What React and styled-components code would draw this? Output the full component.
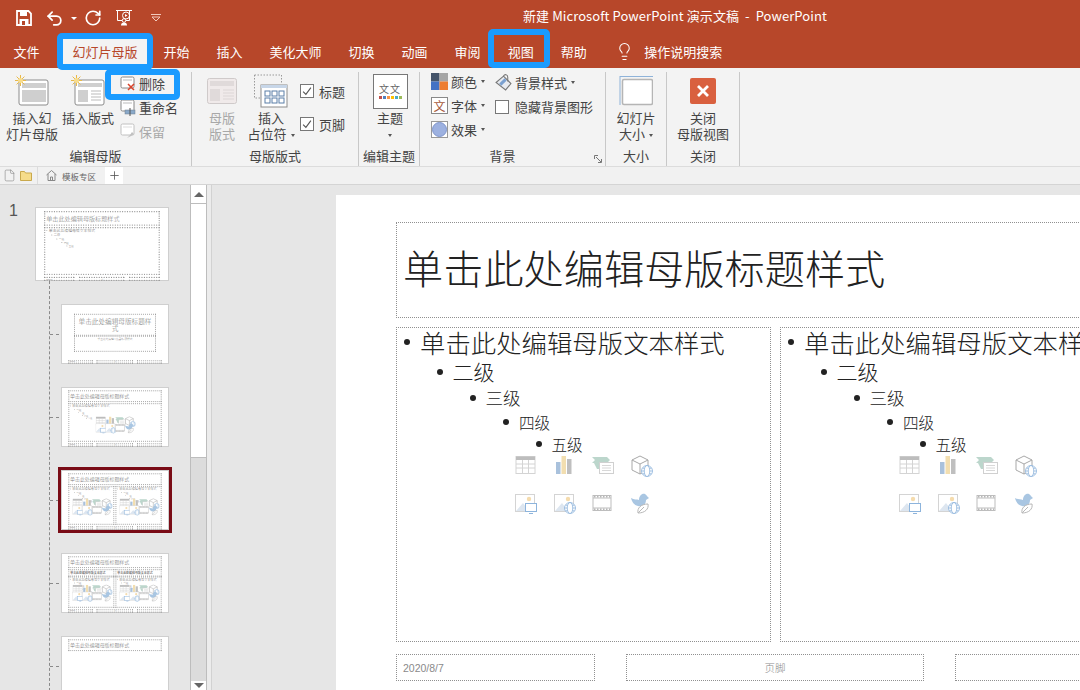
import styled, { createGlobalStyle } from "styled-components";
import { Undo2, RotateCw, Lightbulb, Plus, File } from "lucide-react";

const FONT = `"Noto Sans CJK SC", "Noto Sans", sans-serif`;
const RED = "#b7472a";
const BLUE = "#1a9bff";

const Global = createGlobalStyle`
  html, body {
    margin: 0;
    width: 1080px;
    height: 690px;
    overflow: hidden;
    font-family: ${FONT};
  }
`;

const Page = styled.div`
  width: 1080px;
  height: 690px;
  display: flex;
  flex-direction: column;
  overflow: hidden;
  background: #e6e6e6;
  color: #444;
`;

/* title bar */
const TitleBar = styled.div`
  height: 36px;
  flex: none;
  display: flex;
  align-items: center;
  background: ${RED};
  color: #fff;
`;
const QuickBar = styled.div`
  width: 523px;
  flex: none;
  display: flex;
  align-items: center;
  padding-left: 16px;
  box-sizing: border-box;
`;
const QuickItem = styled.span`
  display: flex;
  margin-left: ${(p) => p.$ml || 0}px;
`;
const TinyCaret = styled.span`
  width: 0;
  height: 0;
  border: 3px solid transparent;
  border-top: 3px solid ${(p) => p.$color || "#fff"};
  border-bottom: none;
  margin-left: ${(p) => p.$ml || 0}px;
`;
const DocTitle = styled.div`
  font-size: 13px;
  letter-spacing: 0.08px;
  padding-bottom: 6px;
  white-space: pre;
  font-family: "Noto Sans CJK SC", sans-serif;
`;

/* tabs */
const TabRow = styled.div`
  height: 32px;
  flex: none;
  display: flex;
  background: ${RED};
  position: relative;
  z-index: 2;
`;
const Tab = styled.div`
  position: relative;
  height: 32px;
  box-sizing: border-box;
  display: flex;
  align-items: center;
  padding: 0 13.5px 2px;
  margin-left: ${(p) => p.$ml || 0}px;
  margin-right: ${(p) => p.$mr || 0}px;
  font-size: 13px;
  white-space: nowrap;
  color: ${(p) => (p.$active ? RED : "#fff")};
  background: ${(p) => (p.$active ? "#f3f3f3" : "transparent")};
`;
const Frame = styled.span`
  position: absolute;
  top: ${(p) => p.$t}px;
  right: ${(p) => p.$r}px;
  bottom: ${(p) => p.$b}px;
  left: ${(p) => p.$l}px;
  border: 6px solid ${BLUE};
  border-radius: 5px;
  pointer-events: none;
  z-index: 5;
`;
const Search = styled.div`
  display: flex;
  align-items: center;
  gap: 10px;
  margin-left: 15px;
  padding-bottom: 2px;
  font-size: 13px;
  color: #fff;
`;

/* ribbon */
const Ribbon = styled.div`
  height: 98px;
  flex: none;
  display: flex;
  background: #f3f3f3;
  font-size: 13px;
  color: #444;
`;
const Group = styled.div`
  position: relative;
  width: ${(p) => p.$w}px;
  height: 94px;
  margin-top: 4px;
  flex: none;
  display: flex;
  flex-direction: column;
  box-sizing: border-box;
  border-right: 1px solid #c8c8c8;
`;
const GroupBody = styled.div`
  height: 72px;
  display: flex;
  padding-left: ${(p) => p.$pl || 0}px;
  gap: ${(p) => p.$gap || 0}px;
`;
const GroupLabel = styled.div`
  flex: 1;
  display: flex;
  align-items: center;
  justify-content: center;
  padding-top: 2px;
  padding-right: ${(p) => p.$pr || 0}px;
  font-size: 13px;
  line-height: 16px;
`;
const Launcher = styled.svg`
  position: absolute;
  right: 3px;
  bottom: 3px;
`;
const LargeButton = styled.div`
  width: ${(p) => p.$w || 56}px;
  flex: none;
  display: flex;
  flex-direction: column;
  align-items: center;
  color: ${(p) => (p.$off ? "#a8a8a8" : "#444")};
`;
const IconBox = styled.div`
  height: 38px;
  display: flex;
  align-items: center;
  justify-content: center;
`;
const LargeLabel = styled.div`
  line-height: 16px;
  text-align: center;
  white-space: nowrap;
`;
const SmallColumn = styled.div`
  width: ${(p) => p.$w || 60}px;
  flex: none;
  display: flex;
  flex-direction: column;
  margin-left: ${(p) => p.$ml || 0}px;
  margin-top: ${(p) => p.$mt || 0}px;
`;
const SmallButton = styled.div`
  position: relative;
  height: 24px;
  flex: none;
  display: flex;
  align-items: center;
  gap: ${(p) => p.$gap || 2}px;
  white-space: nowrap;
  color: ${(p) => (p.$off ? "#a8a8a8" : "#444")};
`;
const CheckColumn = styled.div`
  display: flex;
  flex-direction: column;
  gap: 17px;
  padding-top: 11px;
`;
const CheckRow = styled.label`
  display: flex;
  align-items: center;
  gap: 5px;
  height: 16px;
  white-space: nowrap;
`;
const CheckBox = styled.span`
  width: 14px;
  height: 14px;
  box-sizing: border-box;
  border: 1px solid #777;
  background: #fff;
  display: flex;
  align-items: center;
  justify-content: center;
`;
const Caret = styled.span`
  display: inline-block;
  width: 0;
  height: 0;
  margin-left: ${(p) => p.$ml ?? 4}px;
  vertical-align: middle;
  border-left: 2.5px solid transparent;
  border-right: 2.5px solid transparent;
  border-top: 3px solid #555;
`;
const ThemeCard = styled.div`
  width: 35px;
  height: 35px;
  box-sizing: border-box;
  border: 1px solid #777;
  background: #fff;
  display: flex;
  flex-direction: column;
  align-items: center;
  justify-content: center;
  gap: 1px;
  font-size: 10px;
  line-height: 12px;
  letter-spacing: 1px;
  color: #666;
`;
const ThemeDots = styled.div`
  display: flex;
  gap: 1px;
`;
const ThemeDot = styled.i`
  width: 3px;
  height: 3px;
  background: ${(p) => p.$c};
`;
const LetterBox = styled.span`
  width: 17px;
  height: 17px;
  box-sizing: border-box;
  border: 1px solid #888;
  background: #fff;
  color: #a5583a;
  font-size: 12px;
  line-height: 15px;
  text-align: center;
`;

/* little tab strip */
const Strip = styled.div`
  height: 19px;
  flex: none;
  display: flex;
  align-items: stretch;
  box-sizing: border-box;
  background: #f1f1f1;
  border-top: 1px solid #dcdcdc;
  border-bottom: 1px solid #d4d4d4;
`;
const StripIcons = styled.div`
  width: 38px;
  display: flex;
  align-items: center;
  gap: 4px;
  padding-left: 3px;
  box-sizing: border-box;
  border-right: 1px solid #dcdcdc;
`;
const StripTab = styled.div`
  width: 67px;
  display: flex;
  align-items: center;
  gap: 5px;
  padding-left: 8px;
  box-sizing: border-box;
  font-size: 8.5px;
  color: #666;
`;
const StripAdd = styled.div`
  width: 18px;
  background: #fff;
  display: flex;
  align-items: center;
  justify-content: center;
`;

/* work area */
const Work = styled.div`
  flex: 1;
  min-height: 0;
  display: flex;
`;
const Sidebar = styled.div`
  width: 190px;
  flex: none;
  padding-top: 22px;
  box-sizing: border-box;
  overflow: hidden;
`;
const MasterRow = styled.div`
  display: flex;
  height: 74px;
`;
const SlideNumber = styled.div`
  width: 35px;
  margin-top: -4px;
  padding-left: 9px;
  box-sizing: border-box;
  font-size: 16px;
  line-height: 16px;
  color: #555;
  font-family: "Liberation Sans", sans-serif;
`;
const Tree = styled.div`
  margin-left: 49px;
  padding-top: 23px;
  border-left: 1px dashed #8a8a8a;
  display: flex;
  flex-direction: column;
  gap: 23px;
`;
const TreeRow = styled.div`
  display: flex;
  align-items: center;
  height: 60px;
  flex: none;
`;
const TreeDash = styled.span`
  width: 9px;
  margin-right: 2px;
  border-top: 1px dashed #8a8a8a;
`;
const Thumb = styled.div`
  width: ${(p) => p.$w}px;
  height: ${(p) => p.$h}px;
  flex: none;
  background: #fff;
  overflow: hidden;
  box-shadow: inset 0 0 0 1px #cfcfcf;
  outline: ${(p) => (p.$selected ? "3px solid #7a0c16" : "none")};
`;
const ThumbScale = styled.div`
  --line: 8px;
  --ink: #777;
  width: 881px;
  transform-origin: top left;
  transform: scale(${(p) => p.$s});
`;
const ScrollBar = styled.div`
  width: 17px;
  flex: none;
  display: flex;
  flex-direction: column;
  box-sizing: border-box;
  background: #dcdcdc;
  border-left: 1px solid #bdbdbd;
  border-right: 1px solid #bdbdbd;
`;
const ScrollButton = styled.div`
  height: ${(p) => p.$h}px;
  flex: none;
  background: #fff;
  display: flex;
  align-items: center;
  justify-content: center;
  margin-top: ${(p) => (p.$end ? "auto" : "0")};
`;
const ScrollThumb = styled.div`
  height: 255px;
  flex: none;
  box-sizing: border-box;
  background: #fff;
  border-top: 1px solid #bdbdbd;
  border-bottom: 1px solid #bdbdbd;
`;
const Arrow = styled.span`
  width: 0;
  height: 0;
  border-left: 5px solid transparent;
  border-right: 5px solid transparent;
  border-bottom: ${(p) => (p.$down ? "none" : "5px solid #666")};
  border-top: ${(p) => (p.$down ? "5px solid #666" : "none")};
`;
const Splitter = styled.div`
  width: 4px;
  flex: none;
  background: #ececec;
  border-right: 1px solid #d2d2d2;
`;
const Canvas = styled.div`
  flex: 1;
  min-width: 0;
  padding: 10px 0 0 124px;
  overflow: hidden;
`;
const SlideSheet = styled.div`
  --line: 1px;
  --ink: #222;
  width: 881px;
  height: 520px;
  background: #fff;
`;

/* slide content, used full size and scaled into thumbnails */
const SlideFrame = styled.div`
  width: 881px;
  height: 490px;
  box-sizing: border-box;
  padding: 27px 60px 4px;
  display: flex;
  flex-direction: column;
  gap: 9px;
  color: var(--ink);
`;
const Placeholder = styled.div`
  position: relative;
  box-sizing: border-box;
  border: var(--line) dotted #909090;
  font-weight: 300;
`;
const TitleBox = styled(Placeholder)`
  height: 96px;
  flex: none;
  display: flex;
  align-items: center;
  padding: 0 0 6px 6px;
  font-size: 40.2px;
  line-height: 48px;
  white-space: nowrap;
`;
const CoverTitle = styled(Placeholder)`
  height: 179px;
  flex: none;
  margin: 53px 46px -9px;
  padding: 0 24px;
  display: flex;
  align-items: center;
  text-align: center;
  font-size: 54px;
  line-height: 60px;
`;
const CoverSub = styled(Placeholder)`
  height: 131px;
  flex: none;
  margin: 0 46px;
  text-align: center;
  font-size: 22px;
  line-height: 28px;
`;
const BodyBox = styled(Placeholder)`
  height: ${(p) => p.$h || 315}px;
  flex: none;
  padding-left: 7px;
  overflow: hidden;
`;
const Columns = styled.div`
  display: grid;
  grid-template-columns: 375px 377px;
  gap: 9px;
`;
const Stack = styled.div`
  display: flex;
  flex-direction: column;
`;
const CompareHead = styled(Placeholder)`
  height: 60px;
  padding-left: 7px;
  font-size: 24px;
  font-weight: 700;
  white-space: nowrap;
  overflow: hidden;
`;
const Level = styled.div`
  position: relative;
  font-size: ${(p) => p.$size}px;
  line-height: ${(p) => p.$lh}px;
  margin-left: ${(p) => p.$indent + 16}px;
  white-space: nowrap;
  &::before {
    content: "";
    position: absolute;
    left: -16px;
    top: 50%;
    width: 6px;
    height: 6px;
    margin-top: -3px;
    border-radius: 50%;
    background: currentColor;
  }
`;
const FooterRow = styled.div`
  display: grid;
  grid-template-columns: 199px 298px 202px;
  gap: 31px;
  margin-top: auto;
`;
const FooterBox = styled(Placeholder)`
  height: 27px;
  padding: 0 6px;
  display: flex;
  align-items: center;
  justify-content: ${(p) => (p.$center ? "center" : "flex-start")};
  font-size: 10.5px;
  color: #8a8a8a;
  font-family: "Liberation Sans", ${FONT};
`;
const IconGrid = styled.div`
  position: absolute;
  left: ${(p) => p.$left}px;
  top: ${(p) => p.$top}px;
  display: grid;
  grid-template-columns: repeat(4, 20px);
  grid-auto-rows: 20px;
  column-gap: 18.5px;
  row-gap: 18px;
`;
const ThumbIcons = styled(IconGrid)`
  grid-auto-rows: 14px;
  column-gap: 0;
  row-gap: 0;
  transform-origin: top left;
  transform: scale(4);
`;

const Sun = ({ x = 0, y = 0 }) => (
  <g stroke="#e8b94a" strokeWidth="1" transform={`translate(${x} ${y})`}>
    <path d="M5.500 0v11M0 5.500h11M1.600 1.600l7.800 7.800M9.400 1.600l-7.800 7.800" />
    <circle cx="5.500" cy="5.500" r="2.500" fill="#f7dc8c" stroke="none" />
  </g>
);

const SaveIcon = () => (
  <svg width="16" height="16" viewBox="0 0 16 16">
    <path d="M1 1h11.500L15 3.500V15H1z" fill="none" stroke="#fff" strokeWidth="1.800" />
    <rect x="4" y="1" width="7" height="5" fill="#fff" />
    <rect x="3.500" y="9" width="9" height="6" fill="#fff" />
    <rect x="6" y="11" width="3" height="4" fill={RED} />
  </svg>
);
const MasterIcon = () => (
  <svg width="34" height="32" viewBox="0 0 34 32">
    <rect x="4" y="5" width="29" height="25" rx="2" fill="#fff" stroke="#8c8c8c" />
    <rect x="7" y="8" width="24" height="5" fill="#cfcfcf" />
    <rect x="7" y="15" width="24" height="12" fill="#cfcfcf" />
    <Sun />
  </svg>
);
const LayoutIcon = () => (
  <svg width="34" height="32" viewBox="0 0 34 32">
    <rect x="4" y="5" width="29" height="25" rx="2" fill="#fff" stroke="#8c8c8c" />
    <rect x="7" y="8" width="24" height="4" fill="#cfcfcf" />
    <rect x="7" y="15" width="10" height="12" fill="#cfcfcf" />
    <path d="M20 16h10M20 19h10M20 22h10M20 25h10" stroke="#bbb" />
    <Sun />
  </svg>
);
const DeleteIcon = () => (
  <svg width="17" height="17" viewBox="0 0 17 17">
    <rect x="1" y="2" width="13" height="11" rx="1.500" fill="#fff" stroke="#888" />
    <path d="M3 5h9" stroke="#bbb" />
    <path d="M8 9l6 6M14 9l-6 6" stroke="#d8432b" strokeWidth="1.500" />
  </svg>
);
const RenameIcon = () => (
  <svg width="17" height="17" viewBox="0 0 17 17">
    <rect x="1" y="1" width="13" height="11" rx="1.500" fill="#fff" stroke="#888" />
    <path d="M3 4h9" stroke="#bbb" />
    <rect x="5" y="11" width="10" height="4" fill="#8aa9c9" stroke="#6d7d8c" strokeWidth=".5" />
    <path d="M10 9v8" stroke="#555" />
  </svg>
);
const KeepIcon = () => (
  <svg width="17" height="17" viewBox="0 0 17 17">
    <rect x="1" y="1" width="13" height="11" rx="1.500" fill="#fff" stroke="#c0c0c0" />
    <path d="M3 4h9" stroke="#ddd" />
    <path d="M7 15l3-3 2-3 2 2-3 2z" fill="#c0c0c0" />
  </svg>
);
const LayoutOffIcon = () => (
  <svg width="30" height="26" viewBox="0 0 30 26">
    <rect x=".5" y=".5" width="29" height="25" rx="2" fill="#f0eaea" stroke="#cfcaca" />
    <rect x="3" y="3" width="24" height="5" fill="#e0dada" />
    <rect x="3" y="11" width="10" height="12" fill="#e0dada" />
    <path d="M16 12h11M16 15h11M16 18h11M16 21h11" stroke="#dcd6d6" />
  </svg>
);
const InsertHolderIcon = () => (
  <svg width="34" height="34" viewBox="0 0 34 34">
    <path d="M.5 1h27v9M.5 1v23h6" fill="none" stroke="#999" strokeDasharray="1.500 1.500" />
    <rect x="7" y="11" width="26" height="22" fill="#fff" stroke="#8c8c8c" />
    <rect x="7" y="11" width="26" height="3" fill="#c7d6e8" />
    {[0, 1, 2].map((c) => [0, 1].map((r) => (
      <rect key={`${c}${r}`} x={11 + c * 7} y={17 + r * 7} width="5" height="5" fill="#fff" stroke="#5b7fa8" />
    )))}
  </svg>
);
const Check = () => (
  <svg width="10" height="10" viewBox="0 0 9 9">
    <path d="M1 5l2.500 2.500L8 1.500" fill="none" stroke="#555" strokeWidth="1" />
  </svg>
);
const ColorIcon = () => (
  <svg width="17" height="17" viewBox="0 0 17 17">
    <rect width="8.500" height="8.500" fill="#44546a" />
    <rect x="8.500" width="8.500" height="8.500" fill="#a5a5a5" />
    <rect y="8.500" width="8.500" height="8.500" fill="#4472c4" />
    <rect x="8.500" y="8.500" width="8.500" height="8.500" fill="#ed7d31" />
  </svg>
);
const EffectIcon = () => (
  <svg width="17" height="17" viewBox="0 0 17 17">
    <rect x=".5" y=".5" width="16" height="16" fill="#fff" stroke="#999" />
    <circle cx="8.500" cy="8.500" r="7" fill="#9db1e0" stroke="#7f95cc" />
  </svg>
);
const BucketIcon = () => (
  <svg width="17" height="17" viewBox="0 0 16 16">
    <path d="M1 8l7-6 7 7-5 6z" fill="#e7eaf0" stroke="#777" />
    <path d="M8 2c1-2 4-2 4 1v4" fill="none" stroke="#777" />
    <path d="M4 9l5-5 2 2-5 5z" fill="#7aa0d0" />
  </svg>
);
const SizeIcon = () => (
  <svg width="34" height="30" viewBox="0 0 34 30">
    <path d="M1 .5h33M1 0v29" stroke="#8fb3d9" strokeWidth="1" />
    <rect x="3.500" y="3.500" width="30" height="25" rx="1.500" fill="#fff" stroke="#b5b5b5" strokeWidth="1.500" />
  </svg>
);
const CloseIcon = () => (
  <svg width="26" height="26" viewBox="0 0 26 26">
    <rect width="26" height="26" rx="2" fill="#d9603f" />
    <path d="M8 8l10 10M18 8L8 18" stroke="#fff" strokeWidth="2.800" />
  </svg>
);
const ShowIcon = () => (
  <svg width="20" height="18" viewBox="0 0 20 18" fill="none" stroke="#fff">
    <path d="M1 1.500h16M2.500 1.500v10h12v-10" />
    <circle cx="11" cy="6.500" r="3.500" />
    <path d="M10 5l2.500 1.500L10 8z" fill="#fff" stroke="none" />
    <path d="M6 16.500a3 3 0 0 1 6 0z" fill="#fff" stroke="none" />
    <circle cx="9" cy="11.500" r="1.800" fill={RED} />
  </svg>
);
const CustomizeIcon = () => (
  <svg width="10" height="8" viewBox="0 0 10 8" fill="none" stroke="#f2c9bc">
    <path d="M0 .5h10M1 3l4 4 4-4z" />
  </svg>
);
const FolderIcon = () => (
  <svg width="12" height="11" viewBox="0 0 12 11">
    <path d="M.5 1.500h4l1 1.500h6v7.500H.500z" fill="#f6dc8a" stroke="#c9a94d" />
  </svg>
);
const HomeIcon = () => (
  <svg width="11" height="11" viewBox="0 0 11 11" fill="none" stroke="#888">
    <path d="M.5 5L5.500.5 10.500 5M2 4v6.500h7V4M4.500 10.500V7h2v3.500" />
  </svg>
);
const LaunchGlyph = () => (
  <Launcher width="8" height="8" viewBox="0 0 8 8" fill="none" stroke="#777">
    <path d="M.5 4V.5H4M2 2l5 5M7.500 4v3.500H4" />
  </Launcher>
);

/* placeholder icons */
const TableIcon = () => (
  <svg width="21" height="20" viewBox="0 0 20 20">
    <rect x=".5" y="1.500" width="19" height="17" fill="#fff" stroke="#d4d4d4" />
    <rect x=".5" y="1.500" width="19" height="3.500" fill="#bdbdbd" />
    <path d="M.5 9h19M.5 13h19M7 5v13M13 5v13" stroke="#d4d4d4" />
  </svg>
);
const BarsIcon = () => (
  <svg width="20" height="20" viewBox="0 0 20 20">
    <rect x="2" y="7" width="4.500" height="12" fill="#a9c1dc" />
    <rect x="7.500" y="1" width="4.500" height="18" fill="#f2deb0" />
    <rect x="13" y="4" width="4.500" height="15" fill="#bfbfbf" />
  </svg>
);
const ArtIcon = () => (
  <svg width="22" height="20" viewBox="0 0 22 20">
    <path d="M0 2h15l3 3-3 3H0l3-3z" fill="#bcd6cc" />
    <path d="M2 8h10v6H5z" fill="#bcd6cc" />
    <rect x="7.500" y="7.500" width="14" height="11" fill="#fff" stroke="#d0d0d0" />
    <path d="M10 10.500h9M10 13h9M10 15.500h9" stroke="#d8d8d8" />
  </svg>
);
const Globe = ({ x, y, r = 5.500 }) => (
  <g transform={`translate(${x} ${y})`} fill="#fff" stroke="#8db4dc" strokeWidth=".8">
    <circle r={r} />
    <path d={`M${-r} 0h${2 * r}M0 ${-r}v${2 * r}M${-r * 0.8} ${-r * 0.5}h${1.6 * r}M${-r * 0.8} ${r * 0.5}h${1.6 * r}`} />
    <ellipse rx={r * 0.5} ry={r} />
  </g>
);
const CubeIcon = () => (
  <svg width="22" height="22" viewBox="0 0 22 22">
    <path d="M1 5l8-4 8 4v10l-8 4-8-4zM1 5l8 4 8-4M9 9v10" fill="#fff" stroke="#a8a8a8" />
    <Globe x={16} y={16} />
  </svg>
);
const PictureBase = () => (
  <g>
    <rect x=".5" y="1.500" width="19" height="17" fill="#fff" stroke="#d4d4d4" />
    <path d="M1 18l7-8 6 8z" fill="#dde6f0" />
    <circle cx="14" cy="6" r="2.200" fill="#f5dcae" />
  </g>
);
const PictureScreenIcon = () => (
  <svg width="22" height="22" viewBox="0 0 22 22">
    <PictureBase />
    <rect x="10.500" y="10.500" width="11" height="8" fill="#fff" stroke="#8db4dc" />
    <path d="M14 20.500h4" stroke="#8db4dc" />
  </svg>
);
const PictureGlobeIcon = () => (
  <svg width="22" height="22" viewBox="0 0 22 22">
    <PictureBase />
    <Globe x={16} y={15} />
  </svg>
);
const FilmIcon = () => (
  <svg width="20" height="20" viewBox="0 0 20 20">
    <rect x="1" y="2.500" width="18" height="15" fill="#fff" stroke="#bdbdbd" />
    <path d="M1 5h18M1 15h18" stroke="#bdbdbd" />
    <path d="M2 3.800h16M2 16.200h16" stroke="#999" strokeDasharray="1.500 1.500" />
  </svg>
);
const BirdIcon = () => (
  <svg width="22" height="22" viewBox="0 0 22 22">
    <path d="M0 5c3 2 6 1 8 2 0-4 3-7 6-6 2 1 2 3 4 4l-3 2c0 4-3 7-8 6C3 12 1 9 0 5z" fill="#a9c6e2" />
    <path d="M7 20c-1-5 3-9 10-9 1 5-3 9-10 9zM7 20l6-6" fill="#fff" stroke="#b8b8b8" />
  </svg>
);

const PlaceholderIcons = ({ left, top, thumb }) => {
  const Grid = thumb ? ThumbIcons : IconGrid;
  return (
    <Grid $left={left} $top={top}>
      <TableIcon />
      <BarsIcon />
      <ArtIcon />
      <CubeIcon />
      <PictureScreenIcon />
      <PictureGlobeIcon />
      <FilmIcon />
      <BirdIcon />
    </Grid>
  );
};

const LEVELS = [
  { text: "单击此处编辑母版文本样式", size: 25.4, lh: 28, indent: 0 },
  { text: "二级", size: 21, lh: 31, indent: 32.5 },
  { text: "三级", size: 17.6, lh: 22, indent: 65.5 },
  { text: "四级", size: 15.6, lh: 26, indent: 99 },
  { text: "五级", size: 15.6, lh: 18, indent: 131.5 },
];

const TITLE = "单击此处编辑母版标题样式";

const Levels = () =>
  LEVELS.map((l) => (
    <Level key={l.text} $size={l.size} $lh={l.lh} $indent={l.indent}>
      {l.text}
    </Level>
  ));

const Footers = () => (
  <FooterRow>
    <FooterBox>2020/8/7</FooterBox>
    <FooterBox $center>页脚</FooterBox>
    <FooterBox />
  </FooterRow>
);

function SlideContent({ layout, thumb }) {
  const icons = thumb ? { thumb: true, top: 90, left: 25 } : { left: 118, top: 127 };
  if (layout === "cover") {
    return (
      <SlideFrame>
        <CoverTitle>{TITLE}</CoverTitle>
        <CoverSub>单击此处编辑母版副标题样式</CoverSub>
        <Footers />
      </SlideFrame>
    );
  }
  return (
    <SlideFrame>
      <TitleBox>{TITLE}</TitleBox>
      {layout === "master" && (
        <BodyBox>
          <Levels />
        </BodyBox>
      )}
      {layout === "single" && (
        <BodyBox>
          <Levels />
          <PlaceholderIcons thumb left={214} top={98} />
        </BodyBox>
      )}
      {layout === "double" && (
        <Columns>
          <BodyBox>
            <Levels />
            <PlaceholderIcons {...icons} />
          </BodyBox>
          <BodyBox>
            <Levels />
            <PlaceholderIcons {...icons} />
          </BodyBox>
        </Columns>
      )}
      {layout === "compare" && (
        <Columns>
          {[0, 1].map((i) => (
            <Stack key={i}>
              <CompareHead>单击此处编辑母版文本样式</CompareHead>
              <BodyBox $h={255}>
                <Levels />
                <PlaceholderIcons {...icons} top={56} />
              </BodyBox>
            </Stack>
          ))}
        </Columns>
      )}
      <Footers />
    </SlideFrame>
  );
}

const LAYOUTS = ["cover", "single", "double", "compare", "blank"];

export default function App() {
  return (
    <Page>
      <Global />
      <TitleBar>
        <QuickBar>
          <QuickItem><SaveIcon /></QuickItem>
          <QuickItem $ml={13}><Undo2 size={19} strokeWidth={2.2} /></QuickItem>
          <TinyCaret $ml={7} />
          <QuickItem $ml={7}><RotateCw size={18} strokeWidth={2.2} /></QuickItem>
          <QuickItem $ml={13}><ShowIcon /></QuickItem>
          <QuickItem $ml={16}><CustomizeIcon /></QuickItem>
        </QuickBar>
        <DocTitle>新建 Microsoft PowerPoint 演示文稿  -  PowerPoint</DocTitle>
      </TitleBar>

      <TabRow>
        <Tab>文件</Tab>
        <Tab $ml={6} $mr={-1} $active>
          幻灯片母版
          <Frame $t={-3} $r={-2} $b={-2} $l={-2} />
        </Tab>
        <Tab>开始</Tab>
        <Tab>插入</Tab>
        <Tab>美化大师</Tab>
        <Tab>切换</Tab>
        <Tab>动画</Tab>
        <Tab>审阅</Tab>
        <Tab>
          视图
          <Frame $t={-7} $r={-3} $b={0} $l={-6} />
        </Tab>
        <Tab>帮助</Tab>
        <Search>
          <Lightbulb size={19} strokeWidth={1.3} />
          操作说明搜索
        </Search>
      </TabRow>

      <Ribbon>
        <Group $w={192}>
          <GroupBody $pl={4}>
            <LargeButton>
              <IconBox><MasterIcon /></IconBox>
              <LargeLabel>插入幻<br />灯片母版</LargeLabel>
            </LargeButton>
            <LargeButton>
              <IconBox><LayoutIcon /></IconBox>
              <LargeLabel>插入版式</LargeLabel>
            </LargeButton>
            <SmallColumn $ml={4} $mt={-1}>
              <SmallButton>
                <DeleteIcon />删除
                <Frame $t={-2} $r={0} $b={-5} $l={-15} />
              </SmallButton>
              <SmallButton><RenameIcon />重命名</SmallButton>
              <SmallButton $off><KeepIcon />保留</SmallButton>
            </SmallColumn>
          </GroupBody>
          <GroupLabel>编辑母版</GroupLabel>
        </Group>

        <Group $w={167}>
          <GroupBody $pl={10} $gap={4}>
            <LargeButton $w={40} $off>
              <IconBox><LayoutOffIcon /></IconBox>
              <LargeLabel>母版<br />版式</LargeLabel>
            </LargeButton>
            <LargeButton $w={50}>
              <IconBox><InsertHolderIcon /></IconBox>
              <LargeLabel>插入<br />占位符<Caret /></LargeLabel>
            </LargeButton>
            <CheckColumn>
              <CheckRow><CheckBox><Check /></CheckBox>标题</CheckRow>
              <CheckRow><CheckBox><Check /></CheckBox>页脚</CheckRow>
            </CheckColumn>
          </GroupBody>
          <GroupLabel>母版版式</GroupLabel>
        </Group>

        <Group $w={61}>
          <GroupBody $pl={2}>
            <LargeButton $w={58}>
              <IconBox>
                <ThemeCard>
                  <div>文文</div>
                  <ThemeDots>
                    {["#c0504d", "#4f81bd", "#f79646", "#ffc000", "#4bacc6", "#9bbb59"].map((c) => (
                      <ThemeDot key={c} $c={c} />
                    ))}
                  </ThemeDots>
                </ThemeCard>
              </IconBox>
              <LargeLabel>主题<br /><Caret $ml={0} /></LargeLabel>
            </LargeButton>
          </GroupBody>
          <GroupLabel>编辑主题</GroupLabel>
        </Group>

        <Group $w={186}>
          <GroupBody $pl={11} $gap={0}>
            <SmallColumn $w={64} $mt={-2.5}>
              <SmallButton $gap={3}><ColorIcon />颜色<Caret $ml={1} /></SmallButton>
              <SmallButton $gap={3}><LetterBox>文</LetterBox>字体<Caret $ml={1} /></SmallButton>
              <SmallButton $gap={3}><EffectIcon />效果<Caret $ml={1} /></SmallButton>
            </SmallColumn>
            <SmallColumn $w={100} $mt={-1.5}>
              <SmallButton $gap={3}><BucketIcon />背景样式<Caret $ml={1} /></SmallButton>
              <SmallButton $gap={6}><CheckBox />隐藏背景图形</SmallButton>
            </SmallColumn>
          </GroupBody>
          <GroupLabel $pr={20}>背景</GroupLabel>
          <LaunchGlyph />
        </Group>

        <Group $w={61}>
          <GroupBody>
            <LargeButton $w={60}>
              <IconBox><SizeIcon /></IconBox>
              <LargeLabel>幻灯片<br />大小<Caret /></LargeLabel>
            </LargeButton>
          </GroupBody>
          <GroupLabel>大小</GroupLabel>
        </Group>

        <Group $w={73}>
          <GroupBody>
            <LargeButton $w={72}>
              <IconBox><CloseIcon /></IconBox>
              <LargeLabel>关闭<br />母版视图</LargeLabel>
            </LargeButton>
          </GroupBody>
          <GroupLabel>关闭</GroupLabel>
        </Group>
      </Ribbon>

      <Strip>
        <StripIcons>
          <File size={13} strokeWidth={1} color="#777" />
          <FolderIcon />
        </StripIcons>
        <StripTab><HomeIcon />模板专区</StripTab>
        <StripAdd><Plus size={13} strokeWidth={1.5} color="#555" /></StripAdd>
      </Strip>

      <Work>
        <Sidebar>
          <MasterRow>
            <SlideNumber>1</SlideNumber>
            <Thumb $w={134} $h={74}>
              <ThumbScale $s={0.152}>
                <SlideContent layout="master" thumb />
              </ThumbScale>
            </Thumb>
          </MasterRow>
          <Tree>
            {LAYOUTS.map((layout) => (
              <TreeRow key={layout}>
                <TreeDash />
                <Thumb $w={108} $h={60} $selected={layout === "double"}>
                  <ThumbScale $s={0.1226}>
                    <SlideContent layout={layout} thumb />
                  </ThumbScale>
                </Thumb>
              </TreeRow>
            ))}
          </Tree>
        </Sidebar>
        <ScrollBar>
          <ScrollButton $h={18}><Arrow /></ScrollButton>
          <ScrollThumb />
          <ScrollButton $h={9} $end><Arrow $down /></ScrollButton>
        </ScrollBar>
        <Splitter />
        <Canvas>
          <SlideSheet>
            <SlideContent layout="double" />
          </SlideSheet>
        </Canvas>
      </Work>
    </Page>
  );
}
